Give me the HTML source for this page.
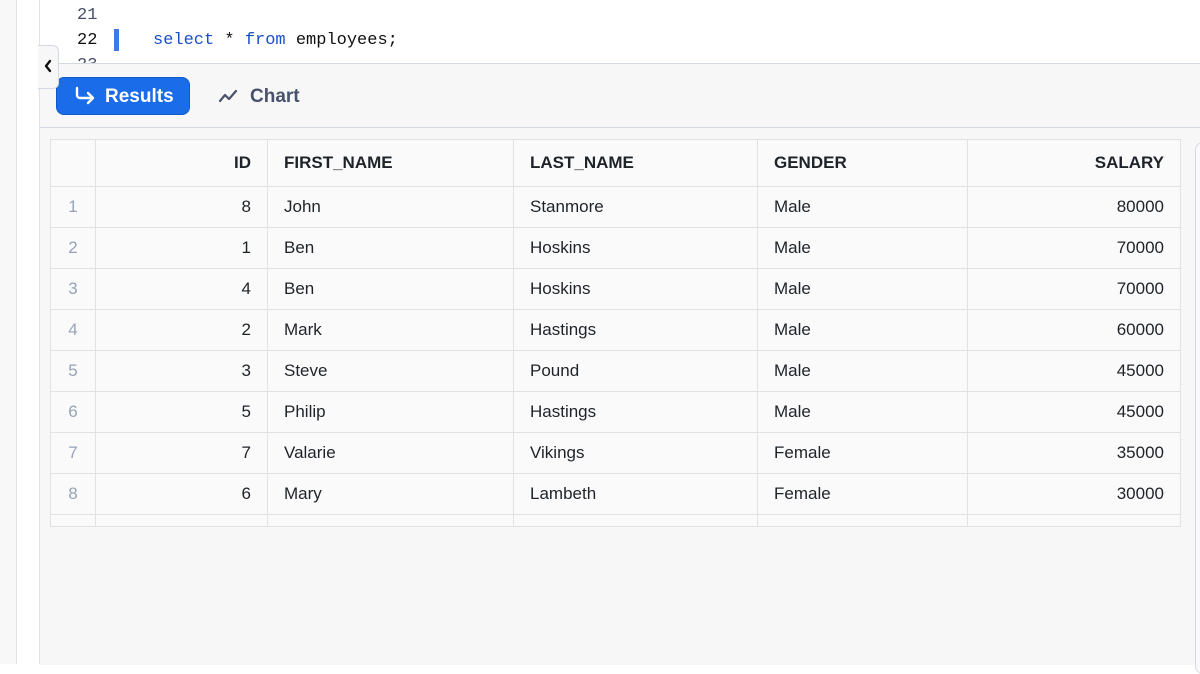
<!DOCTYPE html>
<html><head><style>
body{margin:0;width:1200px;height:664px;overflow:hidden;background:#fff;font-family:"Liberation Sans",sans-serif;position:relative}
.ls{position:absolute;left:0;top:0;width:16px;height:664px;background:#f8f8f9;border-right:1px solid #dfe3ea}
.gut{position:absolute;left:39px;top:0;width:1px;height:664px;background:#dde1e8}
.code{position:absolute;font-family:"Liberation Mono",monospace;font-size:17px}
.panel{position:absolute;left:40px;top:63px;width:1160px;height:601px;background:#f7f7f7;border-top:1px solid #d5d9e2}
.tabs{height:63px;border-bottom:1px solid #d5d9e2}
.btn{position:absolute;left:16px;top:13px;width:132px;height:36px;background:#1a6ce8;border:1px solid #1059c9;border-radius:8px;color:#fff;font-weight:bold;font-size:19px}
table{position:absolute;left:10px;top:75px;border-collapse:collapse;background:#fafafa;font-size:17px;color:#1e2329}
td,th{border:1px solid #e0e2e6;height:40px;padding:0 16px}
th{height:46px;text-align:left;font-weight:bold;font-size:17px}
.r{text-align:right}
.n{color:#97a3b8;text-align:center;padding:0}
tr.last td{height:11px;font-size:0;line-height:0;padding:0}
</style></head><body>
<div class="ls"></div>
<div class="gut"></div>
<div class="code" style="left:77px;top:6px;color:#465066">21</div>
<div class="code" style="left:77px;top:31px;color:#111">22</div>
<div class="code" style="left:77px;top:56px;color:#465066;height:7px;overflow:hidden">23</div>
<div style="position:absolute;left:114px;top:29px;width:5px;height:22px;background:#3b7ae8"></div>
<div class="code" style="left:153px;top:31px;color:#111"><span style="color:#1a4fc9">select</span> * <span style="color:#1a4fc9">from</span> employees;</div>
<div class="panel">
<div class="tabs"></div>
<div class="btn"><svg style="position:absolute;left:17px;top:8px" width="22" height="20" viewBox="0 0 22 20" fill="none" stroke="#fff" stroke-width="2.4" stroke-linecap="round" stroke-linejoin="round"><path d="M3 2v7a3 3 0 0 0 3 3h13M14 7l5 5-5 5"/></svg><span style="position:absolute;left:48px;top:8px">Results</span></div>
<svg style="position:absolute;left:178px;top:25px" width="20" height="14" viewBox="0 0 20 14" fill="none" stroke="#48526a" stroke-width="2.2" stroke-linecap="round" stroke-linejoin="round"><path d="M2 12l5-6 4 4 7-8"/></svg>
<div style="position:absolute;left:210px;top:22px;font-size:19px;font-weight:bold;color:#48526a">Chart</div>
<table>
<tr><th style="width:12px"></th><th class="r" style="width:139px">ID</th><th style="width:213px">FIRST_NAME</th><th style="width:211px">LAST_NAME</th><th style="width:177px">GENDER</th><th class="r" style="width:180px">SALARY</th></tr>
<tr><td class="n">1</td><td class="r">8</td><td>John</td><td>Stanmore</td><td>Male</td><td class="r">80000</td></tr>
<tr><td class="n">2</td><td class="r">1</td><td>Ben</td><td>Hoskins</td><td>Male</td><td class="r">70000</td></tr>
<tr><td class="n">3</td><td class="r">4</td><td>Ben</td><td>Hoskins</td><td>Male</td><td class="r">70000</td></tr>
<tr><td class="n">4</td><td class="r">2</td><td>Mark</td><td>Hastings</td><td>Male</td><td class="r">60000</td></tr>
<tr><td class="n">5</td><td class="r">3</td><td>Steve</td><td>Pound</td><td>Male</td><td class="r">45000</td></tr>
<tr><td class="n">6</td><td class="r">5</td><td>Philip</td><td>Hastings</td><td>Male</td><td class="r">45000</td></tr>
<tr><td class="n">7</td><td class="r">7</td><td>Valarie</td><td>Vikings</td><td>Female</td><td class="r">35000</td></tr>
<tr><td class="n">8</td><td class="r">6</td><td>Mary</td><td>Lambeth</td><td>Female</td><td class="r">30000</td></tr>
<tr class="last"><td></td><td></td><td></td><td></td><td></td><td></td></tr>
</table>
<div style="position:absolute;left:1155px;top:78px;width:10px;height:530px;border:1px solid #d5d9e2;border-right:none;border-radius:8px 0 0 8px;background:#fafafa"></div>
</div>
<div style="position:absolute;left:38px;top:45px;width:20px;height:42px;background:#f7f7f7;border:1px solid #d5d9e2;border-left:none;border-radius:0 6px 6px 0"></div>
<svg style="position:absolute;left:43px;top:59px" width="10" height="14" viewBox="0 0 10 14" fill="none" stroke="#111" stroke-width="2.4" stroke-linecap="round" stroke-linejoin="round"><path d="M7 2L3 7l4 5"/></svg>
</body></html>
